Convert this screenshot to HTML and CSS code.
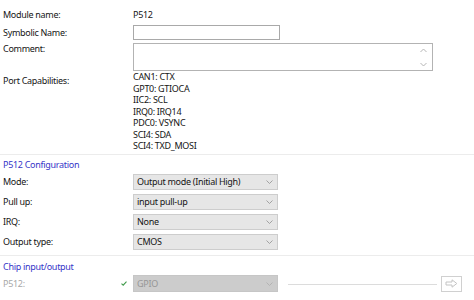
FILE: index.html
```html
<!DOCTYPE html>
<html>
<head>
<meta charset="utf-8">
<link rel="stylesheet" href="styles.css">
</head>
<body>
<div class="form">
  <div class="row r-module">
    <div class="label">Module name:</div>
    <div class="value">P512</div>
  </div>
  <div class="row r-symbolic">
    <div class="label">Symbolic Name:</div>
    <div class="input"></div>
  </div>
  <div class="row r-comment">
    <div class="label">Comment:</div>
    <div class="textarea">
      <div class="scroll">
        <svg width="7" height="5" viewBox="0 0 7 5"><path d="M0.5 4 L3.5 1 L6.5 4" fill="none" stroke="#b5b5b5" stroke-width="1"/></svg>
        <svg width="7" height="5" viewBox="0 0 7 5"><path d="M0.5 1 L3.5 4 L6.5 1" fill="none" stroke="#b5b5b5" stroke-width="1"/></svg>
      </div>
    </div>
  </div>
  <div class="row r-caps">
    <div class="label caps-label">Port Capabilities:</div>
    <div class="caps">
      <div>CAN1: CTX</div>
      <div>GPT0: GTIOCA</div>
      <div>IIC2: SCL</div>
      <div>IRQ0: IRQ14</div>
      <div>PDC0: VSYNC</div>
      <div>SCI4: SDA</div>
      <div>SCI4: TXD_MOSI</div>
    </div>
  </div>
  <div class="sep sep1"></div>
  <div class="heading h1">P512 Configuration</div>
  <div class="selects">
    <div class="row srow">
      <div class="label">Mode:</div>
      <div class="select"><span>Output mode (Initial High)</span><svg width="7" height="4" viewBox="0 0 7 4"><path d="M0.5 0.5 L3.5 3.5 L6.5 0.5" fill="none" stroke="#9a9a9a" stroke-width="0.9"/></svg></div>
    </div>
    <div class="row srow">
      <div class="label">Pull up:</div>
      <div class="select"><span>input pull-up</span><svg width="7" height="4" viewBox="0 0 7 4"><path d="M0.5 0.5 L3.5 3.5 L6.5 0.5" fill="none" stroke="#9a9a9a" stroke-width="0.9"/></svg></div>
    </div>
    <div class="row srow">
      <div class="label">IRQ:</div>
      <div class="select"><span>None</span><svg width="7" height="4" viewBox="0 0 7 4"><path d="M0.5 0.5 L3.5 3.5 L6.5 0.5" fill="none" stroke="#9a9a9a" stroke-width="0.9"/></svg></div>
    </div>
    <div class="row srow">
      <div class="label">Output type:</div>
      <div class="select"><span>CMOS</span><svg width="7" height="4" viewBox="0 0 7 4"><path d="M0.5 0.5 L3.5 3.5 L6.5 0.5" fill="none" stroke="#9a9a9a" stroke-width="0.9"/></svg></div>
    </div>
  </div>
  <div class="sep sep2"></div>
  <div class="heading h2">Chip input/output</div>
  <div class="row r-chip">
    <div class="label chip-label">
      <span>P512:</span>
      <svg class="check" width="6" height="5" viewBox="0 0 6 5"><path d="M0.5 2.6 L2.2 4.2 L5.5 0.6" fill="none" stroke="#3f9a4a" stroke-width="1.1"/></svg>
    </div>
    <div class="select disabled"><span>GPIO</span><svg width="7" height="4" viewBox="0 0 7 4"><path d="M0.5 0.5 L3.5 3.5 L6.5 0.5" fill="none" stroke="#b0b0b0" stroke-width="0.9"/></svg></div>
    <div class="link-line"></div>
    <div class="arrow-btn">
      <svg width="13" height="9" viewBox="0 0 13 9"><path d="M1 3 H7 V0.8 L11.8 4.5 L7 8.2 V6 H1 Z" fill="none" stroke="#c4c4c4" stroke-width="1"/></svg>
    </div>
  </div>
</div>
</body>
</html>
```

FILE: styles.css
```css
html, body {
  margin: 0;
  padding: 0;
  background: #ffffff;
}

body {
  font-family: "Noto Sans", "Open Sans", sans-serif;
  font-size: 9px;
  letter-spacing: -0.3px;
  color: #151515;
  width: 474px;
  height: 300px;
  overflow: hidden;
}

.form {
  display: flex;
  flex-direction: column;
}

.row {
  display: flex;
  align-items: flex-start;
}

.label {
  width: 133px;
  flex: none;
  padding-left: 3px;
  box-sizing: border-box;
  line-height: 12px;
  white-space: nowrap;
}

.value {
  line-height: 12px;
}

.r-module {
  margin-top: 9px;
  height: 12px;
}

.r-symbolic {
  margin-top: 4px;
  align-items: center;
}

.input {
  width: 147px;
  height: 15px;
  box-sizing: border-box;
  border: 1px solid #a9a9a9;
  background: #fff;
}

.r-comment {
  margin-top: 3px;
}

.textarea {
  width: 300px;
  height: 28px;
  box-sizing: border-box;
  border: 1px solid #b3b3b3;
  background: #fff;
  display: flex;
  justify-content: flex-end;
}

.scroll {
  width: 18px;
  display: flex;
  flex-direction: column;
  align-items: center;
  justify-content: space-between;
  padding: 4px 0 3px;
}

.scroll svg {
  display: block;
}

.caps-label {
  padding-top: 3.5px;
}

.caps {
  line-height: 11.5px;
}

.sep {
  height: 1px;
  background: #ececec;
}

.sep1 {
  margin-top: 2.5px;
}

.heading {
  color: #3535c8;
  padding-left: 3px;
  line-height: 12px;
}

.h1 {
  margin-top: 3.5px;
}

.selects {
  margin-top: 3.5px;
  display: flex;
  flex-direction: column;
  gap: 4px;
}

.srow {
  align-items: center;
}

.select {
  width: 145px;
  height: 16px;
  box-sizing: border-box;
  border: 1px solid #cdcdcd;
  background: #e6e6e6;
  display: flex;
  align-items: center;
  justify-content: space-between;
  padding: 0 4px 0 3px;
  line-height: 12px;
  white-space: nowrap;
}

.select svg {
  display: block;
  flex: none;
}

.sep2 {
  margin-top: 5px;
}

.h2 {
  margin-top: 4.5px;
}

.r-chip {
  margin-top: 2.5px;
  align-items: center;
}

.chip-label {
  display: flex;
  align-items: center;
  justify-content: space-between;
  color: #a8a8a8;
  padding-right: 6px;
}

.check {
  display: block;
}

.select.disabled {
  height: 17px;
  background: #cccccc;
  border-color: #c6c6c6;
  color: #969696;
}

.link-line {
  width: 149px;
  height: 1px;
  background: #dcdcdc;
  margin-left: 10px;
  margin-top: 1px;
}

.arrow-btn {
  width: 21px;
  height: 16px;
  box-sizing: border-box;
  border: 1px solid #d0d0d0;
  margin-left: 4px;
  display: flex;
  align-items: center;
  justify-content: center;
  background: #fff;
}

.arrow-btn svg {
  display: block;
}
```
